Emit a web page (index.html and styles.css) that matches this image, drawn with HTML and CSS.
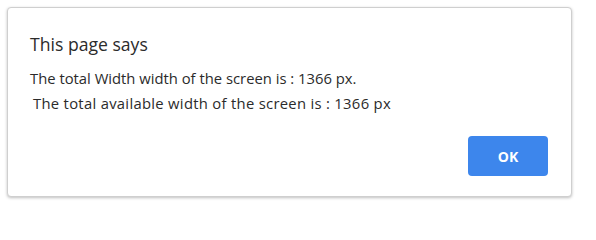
FILE: index.html
```html
<!DOCTYPE html>
<html>
<head>
<meta charset="utf-8">
<link rel="stylesheet" href="styles.css">
</head>
<body>
<div class="dialog">
  <div class="title">This page says</div>
  <div class="message">
    <div class="line">The total Width width of the screen is : 1366 px.</div>
    <div class="line line-indent">The total available width of the screen is : 1366 px</div>
  </div>
  <div class="actions">
    <button class="ok">OK</button>
  </div>
</div>
</body>
</html>
```
FILE: styles.css
```css
html, body {
  margin: 0;
  padding: 0;
  background: #ffffff;
}
body {
  width: 596px;
  height: 203px;
  overflow: hidden;
  font-family: "Open Sans", "Noto Sans", sans-serif;
  color: #333333;
}
.dialog {
  box-sizing: border-box;
  margin: 7px 0 0 7px;
  width: 565px;
  height: 190px;
  border: 1px solid #cfcfcf;
  border-radius: 4px;
  box-shadow: 0 1px 3px rgba(0,0,0,0.25);
  background: #fff;
  padding: 23px 23px 20px 22px;
  display: flex;
  flex-direction: column;
}
.title {
  font-size: 17.6px;
  line-height: 26px;
  color: #2b2b2b;
}
.message {
  margin-top: 9px;
  font-size: 14.8px;
  line-height: 25px;
  color: #2b2b2b;
}
.line-indent {
  padding-left: 3px;
  letter-spacing: 0.3px;
}
.actions {
  margin-top: auto;
  display: flex;
  justify-content: flex-end;
}
.ok {
  width: 80px;
  height: 40px;
  border: none;
  border-radius: 4px;
  background: #3d86ec;
  color: #fff;
  font-family: "Open Sans", "Noto Sans", sans-serif;
  font-weight: 700;
  font-size: 14px;
  padding: 0;
}
```
